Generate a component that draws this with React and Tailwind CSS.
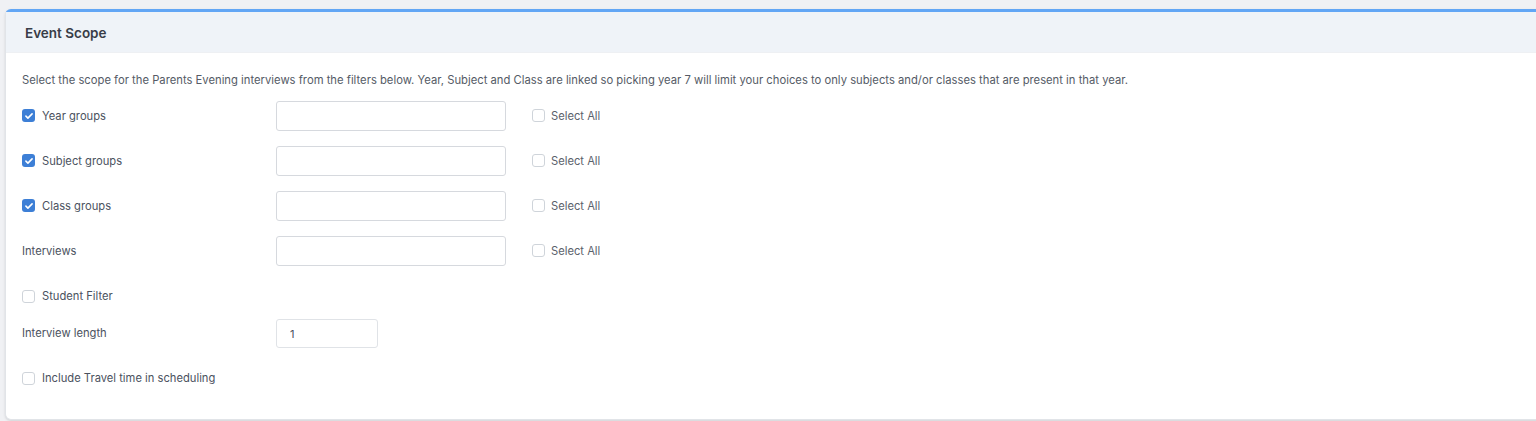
import React, { useState } from "react";

const FONT = { fontFamily: "Inter, 'Noto Sans', sans-serif" };

function Check({ checked, onChange }) {
    return (
        <button
            type="button"
            onClick={onChange}
            className={`w-[13px] h-[13px] rounded-[3px] flex items-center justify-center shrink-0 ${
                checked ? "bg-[#3d7fd6]" : "bg-white border border-[#cfd4da]"
            }`}
        >
            {checked && (
                <svg width="10" height="10" viewBox="0 0 12 12" fill="none">
                    <path d="M2.3 6.2l2.4 2.4 5-5.2" stroke="white" strokeWidth="1.9" strokeLinecap="round" strokeLinejoin="round" />
                </svg>
            )}
        </button>
    );
}

function FilterRow({ label, checkable, checked, onToggle }) {
    const [all, setAll] = useState(false);
    return (
        <div className="flex items-center h-[30px]">
            <div className="w-[254px] flex items-center gap-[7px] text-[11.2px] text-[#4b5260]">
                {checkable && <Check checked={checked} onChange={onToggle} />}
                <span>{label}</span>
            </div>
            <input className="w-[230px] h-[30px] border border-[#d6d9de] rounded-[3px] bg-white outline-none px-3 text-[11px]" />
            <div className="ml-[26px] flex items-center gap-[6px] text-[11.2px] text-[#5b616b]">
                <Check checked={all} onChange={() => setAll(!all)} />
                <span>Select All</span>
            </div>
        </div>
    );
}

export default function App() {
    const [groups, setGroups] = useState({ year: true, subject: true, klass: true });
    const [studentFilter, setStudentFilter] = useState(false);
    const [travel, setTravel] = useState(false);
    const [length, setLength] = useState("1");

    return (
        <div className="bg-[#f0f1f4] h-[421px] overflow-hidden pt-[9px] pl-[5px]" style={FONT}>
            <div className="w-[1560px] h-[411px] bg-white border border-[#e1e4e8] border-t-[3px] border-t-[#62a6f5] rounded-[6px] shadow-sm">
                {/* header */}
                <div className="h-[41px] bg-[#eff3f8] flex items-center pl-[19px] pt-[3px] border-b border-[#eef0f3]">
                    <h2 className="text-[13.5px] font-semibold text-[#383d48]">Event Scope</h2>
                </div>

                <div className="px-[16px] pt-[19px]">
                    <p className="text-[11.25px] leading-[16px] text-[#555b66]">
                        Select the scope for the Parents Evening interviews from the filters below. Year, Subject and Class are linked so picking year 7 will limit your choices to only subjects and/or classes that are present in that year.
                    </p>

                    <div className="mt-[13px] flex flex-col gap-[15px]">
                        <FilterRow label="Year groups" checkable checked={groups.year} onToggle={() => setGroups({ ...groups, year: !groups.year })} />
                        <FilterRow label="Subject groups" checkable checked={groups.subject} onToggle={() => setGroups({ ...groups, subject: !groups.subject })} />
                        <FilterRow label="Class groups" checkable checked={groups.klass} onToggle={() => setGroups({ ...groups, klass: !groups.klass })} />
                        <FilterRow label="Interviews" />
                    </div>

                    <div className="mt-[15px] h-[30px] flex items-center gap-[7px] text-[11.2px] text-[#4b5260]">
                        <Check checked={studentFilter} onChange={() => setStudentFilter(!studentFilter)} />
                        <span>Student Filter</span>
                    </div>

                    <div className="mt-[8px] h-[29px] flex items-center">
                        <div className="w-[254px] text-[11.2px] text-[#4b5260]">Interview length</div>
                        <input
                            value={length}
                            onChange={(e) => setLength(e.target.value)}
                            className="w-[102px] h-[29px] border border-[#e0e3e7] rounded-[3px] px-[13px] text-[11px] text-[#4b5260] outline-none"
                        />
                    </div>

                    <div className="mt-[15px] h-[30px] flex items-center gap-[7px] text-[11.2px] text-[#4b5260]">
                        <Check checked={travel} onChange={() => setTravel(!travel)} />
                        <span>Include Travel time in scheduling</span>
                    </div>
                </div>
            </div>
        </div>
    );
}
